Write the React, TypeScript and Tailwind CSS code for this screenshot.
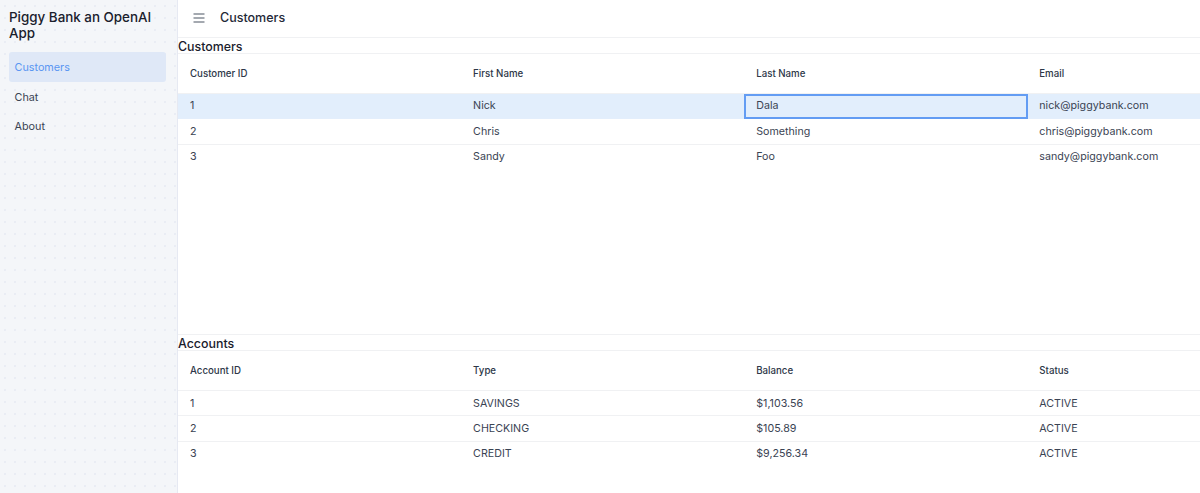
const customers = [
  ["1", "Nick", "Dala", "nick@piggybank.com"],
  ["2", "Chris", "Something", "chris@piggybank.com"],
  ["3", "Sandy", "Foo", "sandy@piggybank.com"],
];
const accounts = [
  ["1", "SAVINGS", "$1,103.56", "ACTIVE"],
  ["2", "CHECKING", "$105.89", "ACTIVE"],
  ["3", "CREDIT", "$9,256.34", "ACTIVE"],
];

function Grid({ cols, rows, active }: { cols: string[]; rows: string[][]; active?: boolean }) {
  return (
    <div className="flex flex-col">
      <div className="grid h-[40px] grid-cols-[283.1px_283.1px_283.1px_1fr] border-b border-[#f0f1f3]">
        {cols.map((c) => (
          <div key={c} className="flex h-[39px] items-center px-3 pt-[2px] text-[9.7px] font-medium text-[#2d3748]">{c}</div>
        ))}
      </div>
      {rows.map((r, i) => {
        const on = active && i === 0;
        return (
          <div key={r[0]} className={`grid h-[25.3px] grid-cols-[283.1px_283.1px_283.1px_1fr] border-b ${on ? "border-[#e3eefc] bg-[#e2eefc]" : "border-[#f0f1f3]"} ${i === 2 ? "border-transparent" : ""}`}>
            {r.map((v, j) => (
              <div key={j} className={`flex items-center px-3 text-[10.7px] text-[#3a4353] ${on ? "" : "pt-[1px]"} ${on && j === 2 ? "-mr-[1px] h-[25px] border-2 border-[#639cf3] px-[10px]" : ""}`}>{v}</div>
            ))}
          </div>
        );
      })}
    </div>
  );
}

export default function App() {
  return (
    <div className="flex h-[493px] w-[1200px] overflow-hidden bg-white font-['Inter',sans-serif]">
      <aside className="flex w-[178px] shrink-0 flex-col border-r border-[#e6e9f2] bg-[#f4f6f9] bg-[radial-gradient(#e6e9f3_0.6px,transparent_0.8px)] bg-[length:10px_12px] pl-[9px] pr-[11px] pt-[9px]">
        <h1 className="text-[13.4px] font-medium leading-[16px] text-[#1a202c]">Piggy Bank an OpenAI App</h1>
        <nav className="mt-[11px] flex flex-col text-[10.8px] text-[#3a4353]">
          <div className="flex h-[30px] items-center rounded-[3px] bg-[#dfe8f7] px-[5.5px] pt-[2px] text-[#5a96f2]">Customers</div>
          <div className="flex h-[29.5px] items-center px-[5.5px] pt-[2px]">Chat</div>
          <div className="flex h-[29.5px] items-center px-[5.5px] pt-[2px]">About</div>
        </nav>
      </aside>
      <main className="flex min-w-0 flex-1 flex-col">
        <header className="flex h-[38px] shrink-0 items-center gap-[15px] border-b border-[#f0f1f3] pl-[15px]">
          <svg width="12" height="10" viewBox="0 0 12 10" className="mb-[2px] text-[#4b5563]" fill="none" stroke="currentColor" strokeWidth="1.2">
            <path d="M0.5 1H11.5M0.5 5H11.5M0.5 9H11.5" />
          </svg>
          <span className="text-[12.5px] font-medium text-[#1f2937]">Customers</span>
        </header>
        <section className="flex h-[297px] shrink-0 flex-col border-b border-[#f0f1f3]">
          <h2 className="h-[16px] shrink-0 border-b border-[#f0f1f3] text-[12.4px] font-medium leading-[17px] text-[#1a202c]">Customers</h2>
          <Grid cols={["Customer ID", "First Name", "Last Name", "Email"]} rows={customers} active />
        </section>
        <section className="flex flex-col">
          <h2 className="h-[16px] shrink-0 border-b border-[#f0f1f3] text-[12.4px] font-medium leading-[17px] text-[#1a202c]">Accounts</h2>
          <Grid cols={["Account ID", "Type", "Balance", "Status"]} rows={accounts} />
        </section>
      </main>
    </div>
  );
}
